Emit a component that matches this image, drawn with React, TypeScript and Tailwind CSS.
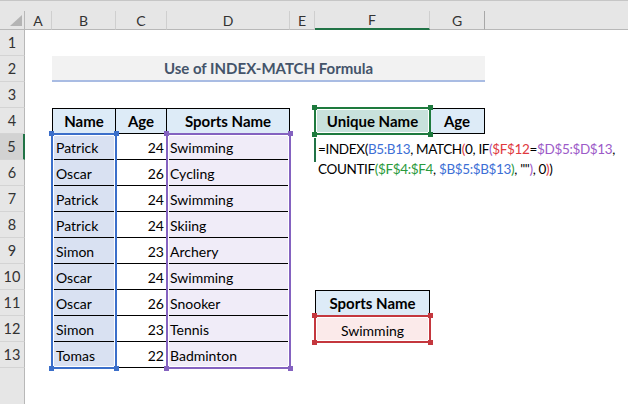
import React from 'react';

// grid lookups: sheet row n sits on grid row n + 2 (strip + column header above)
const RS = ['', 'row-start-1', 'row-start-2', 'row-start-3', 'row-start-4', 'row-start-5', 'row-start-6', 'row-start-7', 'row-start-8', 'row-start-9', 'row-start-10', 'row-start-11', 'row-start-12', 'row-start-13', 'row-start-14', 'row-start-15', 'row-start-16'];
const CS = ['', 'col-start-1', 'col-start-2', 'col-start-3', 'col-start-4', 'col-start-5', 'col-start-6', 'col-start-7', 'col-start-8', 'col-start-9'];
const r = (n: number) => RS[n + 2];

const letters = ['A', 'B', 'C', 'D', 'E', 'F', 'G', ''];

const people: [string, number, string][] = [
  ['Patrick', 24, 'Swimming'],
  ['Oscar', 26, 'Cycling'],
  ['Patrick', 24, 'Swimming'],
  ['Patrick', 24, 'Skiing'],
  ['Simon', 23, 'Archery'],
  ['Oscar', 24, 'Swimming'],
  ['Oscar', 26, 'Snooker'],
  ['Simon', 23, 'Tennis'],
  ['Tomas', 22, 'Badminton'],
];

const Handles = ({ color }: { color: string }) => (
  <>
    <span className={`absolute -left-[4px] -top-[4px] h-[5px] w-[5px] ${color}`} />
    <span className={`absolute -right-[4px] -top-[4px] h-[5px] w-[5px] ${color}`} />
    <span className={`absolute -left-[4px] -bottom-[4px] h-[5px] w-[5px] ${color}`} />
    <span className={`absolute -right-[4px] -bottom-[4px] h-[5px] w-[5px] ${color}`} />
  </>
);

const App: React.FC = () => {
  return (
    <div
      className="grid h-[404px] w-[628px] grid-cols-[25px_27px_64px_51px_123px_25px_115px_55px_1fr] grid-rows-[11px_19px_repeat(13,26px)_1fr] overflow-hidden bg-white text-[14px] text-black"
      style={{ fontFamily: 'Lato, "Open Sans", sans-serif' }}
    >
      {/* strip under the formula bar */}
      <div className="col-span-full row-start-1 border-t border-[#c6c6c6] bg-[#e6e6e6]" />

      {/* corner */}
      <div className="relative col-start-1 row-start-2 border-r border-b border-[#b8b8b8] bg-[#e6e6e6]">
        <svg className="absolute right-[1px] bottom-[2px]" width="13" height="12" viewBox="0 0 13 12">
          <polygon points="12,0 12,11 0,11" fill="#b4b4b4" />
        </svg>
      </div>

      {/* column headers */}
      {letters.map((l, i) => (
        <div
          key={i}
          className={`${CS[i + 2]} row-start-2 flex items-center justify-center bg-[#e6e6e6] text-[14px] text-[#333] ${
            l === 'F' ? 'border-b-2 border-b-[#217346] bg-[#d2d2d2]' : 'border-b border-b-[#b8b8b8]'
          } ${l === '' ? '' : l === 'G' ? 'border-r border-r-[#a8a8a8]' : 'border-r border-r-[#cfcfcf]'}`}
        >
          {l}
        </div>
      ))}

      {/* row headers */}
      {Array.from({ length: 13 }, (_, i) => i + 1).map((n) => (
        <div
          key={n}
          className={`${r(n)} col-start-1 flex items-center justify-center border-b border-b-[#d4d4d4] text-[14.5px] text-[#333] ${
            n === 5 ? 'border-r-2 border-r-[#217346] bg-[#d2d2d2]' : 'border-r border-r-[#b8b8b8] bg-[#e6e6e6]'
          }`}
        >
          {n}
        </div>
      ))}
      <div className="col-start-1 row-start-16 border-r border-[#b8b8b8] bg-[#e6e6e6]" />

      {/* title B2:G2 */}
      <div className={`${r(2)} col-start-3 col-span-6 flex items-center justify-center border-b-2 border-[#a9bce3] bg-[#f2f2f2] text-[15px] font-bold text-[#44546a]`}>
        Use of INDEX-MATCH Formula
      </div>

      {/* main table */}
      <div className={`${r(4)} col-start-3 flex items-center justify-center border border-black bg-[#ddebf7] text-[15px] font-bold`}>Name</div>
      <div className={`${r(4)} col-start-4 flex items-center justify-center border-y border-r border-black bg-[#ddebf7] text-[15px] font-bold`}>Age</div>
      <div className={`${r(4)} col-start-5 flex items-center justify-center border-y border-r border-black bg-[#ddebf7] text-[15px] font-bold`}>Sports Name</div>
      {people.map(([name, age, sport], i) => (
        <React.Fragment key={i}>
          <div className={`${r(i + 5)} col-start-3 flex items-center border-x border-b border-black bg-[#d9e1f2] pl-[3px] pt-[2px]`}>{name}</div>
          <div className={`${r(i + 5)} col-start-4 flex items-center justify-end border-r border-b border-black pr-[2px] pt-[2px]`}>{age}</div>
          <div className={`${r(i + 5)} col-start-5 flex items-center border-r border-b border-black bg-[#f0ecf8] pl-[3px] pt-[2px]`}>{sport}</div>
        </React.Fragment>
      ))}

      {/* lookup headers */}
      <div className={`${r(4)} col-start-7 flex items-center justify-center border border-black bg-[#c8e1dc] text-[15px] font-bold`}>Unique Name</div>
      <div className={`${r(4)} col-start-8 flex items-center justify-center border-y border-r border-black bg-[#ddebf7] text-[15px] font-bold`}>Age</div>

      {/* formula being edited in F5 */}
      <div className={`${r(5)} relative col-start-7 col-span-3 row-span-2 pl-[3px] pt-[5px] text-[13.5px] leading-[20px] tracking-[-0.35px] whitespace-nowrap`}>
        <span className="absolute left-[-1px] top-[4px] h-[24px] w-[2px] bg-[#217346]" />
        <div>
          =INDEX(<span className="text-[#3d6fd6]">B5:B13</span>, MATCH<span className="text-[#e0393e]">(</span>0, IF
          <span className="text-[#9c5ac8]">(</span>
          <span className="text-[#e0393e]">$F$12</span>=<span className="text-[#9c5ac8]">$D$5:$D$13</span>,
        </div>
        <div>
          COUNTIF<span className="text-[#2a9a3c]">(</span>
          <span className="text-[#2a9a3c]">$F$4:$F4</span>, <span className="text-[#3d6fd6]">$B$5:$B$13</span>
          <span className="text-[#2a9a3c]">)</span>, ""<span className="text-[#9c5ac8]">)</span>, 0
          <span className="text-[#e0393e]">)</span>)
        </div>
      </div>

      {/* criteria block */}
      <div className={`${r(11)} col-start-7 flex items-center justify-center border border-black bg-[#ddebf7] text-[15px] font-bold`}>Sports Name</div>
      <div className={`${r(12)} col-start-7 flex items-center justify-center bg-[#fbeaea] pt-[2px]`}>Swimming</div>

      {/* reference highlights */}
      <div className={`${r(5)} relative col-start-3 row-span-9 -m-px border-2 border-[#3b6fca] shadow-[inset_0_0_0_1px_#fff]`}>
        <Handles color="bg-[#3b6fca]" />
      </div>
      <div className={`${r(5)} relative col-start-5 row-span-9 -m-px border-2 border-[#8462c0] shadow-[inset_0_0_0_1px_#fff]`}>
        <Handles color="bg-[#8462c0]" />
      </div>
      <div className={`${r(4)} relative col-start-7 -m-px border-2 border-[#1e7a3e] shadow-[inset_0_0_0_1px_#fff]`}>
        <Handles color="bg-[#1e7a3e]" />
      </div>
      <div className={`${r(12)} relative col-start-7 -m-px border-2 border-[#c4373e] shadow-[inset_0_0_0_1px_#fff]`}>
        <Handles color="bg-[#c4373e]" />
      </div>
    </div>
  );
};

export default App;
